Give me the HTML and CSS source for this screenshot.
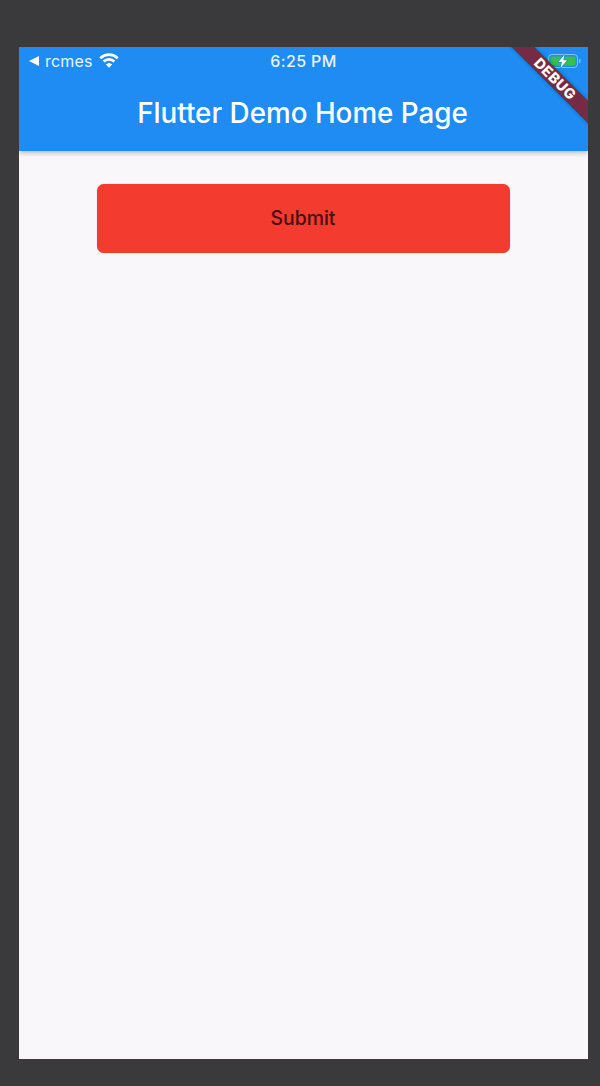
FILE: index.html
```html
<!DOCTYPE html>
<html lang="en">
    <head>
        <meta charset="UTF-8">
        <meta name="viewport" content="width=device-width,initial-scale=1.0">
        <title>Flutter Demo Home Page</title>
        <link rel="stylesheet" href="styles.css">
    </head>
    <body>
        <main class="screen">
            <header class="appbar">
                <div class="status">
                    <div class="status-left">
                        <span class="back-arrow"></span>
                        <span class="carrier">rcmes</span>
                        <svg class="wifi" width="20" height="15" viewBox="0 0 20 15">
                            <path d="M1.3 5.2 A12.6 12.6 0 0 1 18.7 5.2" />
                            <path d="M4.6 8.6 A7.8 7.8 0 0 1 15.4 8.6" />
                            <polygon points="6.8,11.4 10,14.8 13.2,11.4 10,9.8" />
                        </svg>
                    </div>
                    <div class="status-time">6:25 PM</div>
                    <div class="status-right">
                        <svg width="33" height="15" viewBox="0 0 33 15">
                            <rect class="batt-case" x="0.5" y="0.5" width="29" height="13" rx="3.5" />
                            <rect class="batt-level" x="2.5" y="2.5" width="25" height="9" rx="1.5" />
                            <rect class="batt-tip" x="31" y="5" width="1.5" height="4" rx="0.7" />
                            <path class="batt-bolt" d="M16.5 0.5 L10.5 8 H14 L12.5 14 L19 6.3 H15.3 Z" />
                        </svg>
                    </div>
                </div>
                <h1 class="title">Flutter Demo Home Page</h1>
            </header>
            <div class="content">
                <button class="submit">Submit</button>
            </div>
            <div class="debug">DEBUG</div>
        </main>
    </body>
</html>
```

FILE: styles.css
```css
*{
    margin: 0;
    padding: 0;
    box-sizing: border-box;
}
body{
    width: 600px;
    height: 1086px;
    padding: 47px 12px 27px 19px;
    background-color: #3a393b;
    font-family: Inter, "Liberation Sans", sans-serif;
    overflow: hidden;
}
.screen{
    position: relative;
    height: 1012px;
    background-color: #f9f7fa;
    overflow: hidden;
}
.appbar{
    position: relative;
    height: 104px;
    background-color: #1e8cf3;
    color: #fff;
    box-shadow: 0 2px 5px rgba(0, 0, 0, 0.25);
}
.status{
    height: 28px;
    padding: 0 8px 0 10px;
    display: flex;
    align-items: center;
    justify-content: space-between;
    font-size: 16px;
    color: #e8f3fe;
}
.status-left{
    width: 197px;
    display: flex;
    align-items: center;
    gap: 6px;
}
.carrier{
    letter-spacing: 0.2px;
}
.back-arrow{
    border-top: 5px solid transparent;
    border-bottom: 5px solid transparent;
    border-right: 10px solid #fff;
}
.wifi{
    fill: #fff;
    margin-top: -1px;
}
.wifi path{
    fill: none;
    stroke: #fff;
    stroke-width: 2.8;
}
.status-time{
    font-weight: 500;
    letter-spacing: 0.35px;
}
.status-right{
    width: 200px;
    display: flex;
    justify-content: flex-end;
    margin-right: -1px;
}
.batt-case{
    fill: none;
    stroke: rgba(255, 255, 255, 0.45);
}
.batt-level{
    fill: #34c04c;
}
.batt-tip{
    fill: rgba(255, 255, 255, 0.45);
}
.batt-bolt{
    fill: #fff;
    stroke: #1e8cf3;
    stroke-width: 1.2;
    paint-order: stroke;
}
.title{
    margin-top: 22px;
    padding-right: 2px;
    text-align: center;
    font-size: 27.8px;
    font-weight: 450;
    line-height: 32px;
}
.content{
    display: flex;
    justify-content: center;
    padding: 33px 78px 0 78px;
}
.submit{
    width: 413px;
    height: 69px;
    padding: 0 1px 2px 0;
    border: none;
    border-radius: 7px;
    background-color: #f33b2f;
    color: #4a0d0d;
    font-family: inherit;
    font-size: 19.4px;
    font-weight: 450;
    box-shadow: 0 0 1px rgba(0, 0, 0, 0.35);
}
.debug{
    position: absolute;
    top: 24px;
    left: 476px;
    width: 120px;
    height: 16px;
    transform: rotate(45deg);
    background-color: #752a46;
    color: #fff;
    font-size: 14.5px;
    font-weight: 800;
    line-height: 16px;
    text-align: center;
    letter-spacing: 0.4px;
    box-shadow: 0 0 4px rgba(0, 0, 0, 0.3);
}
```
